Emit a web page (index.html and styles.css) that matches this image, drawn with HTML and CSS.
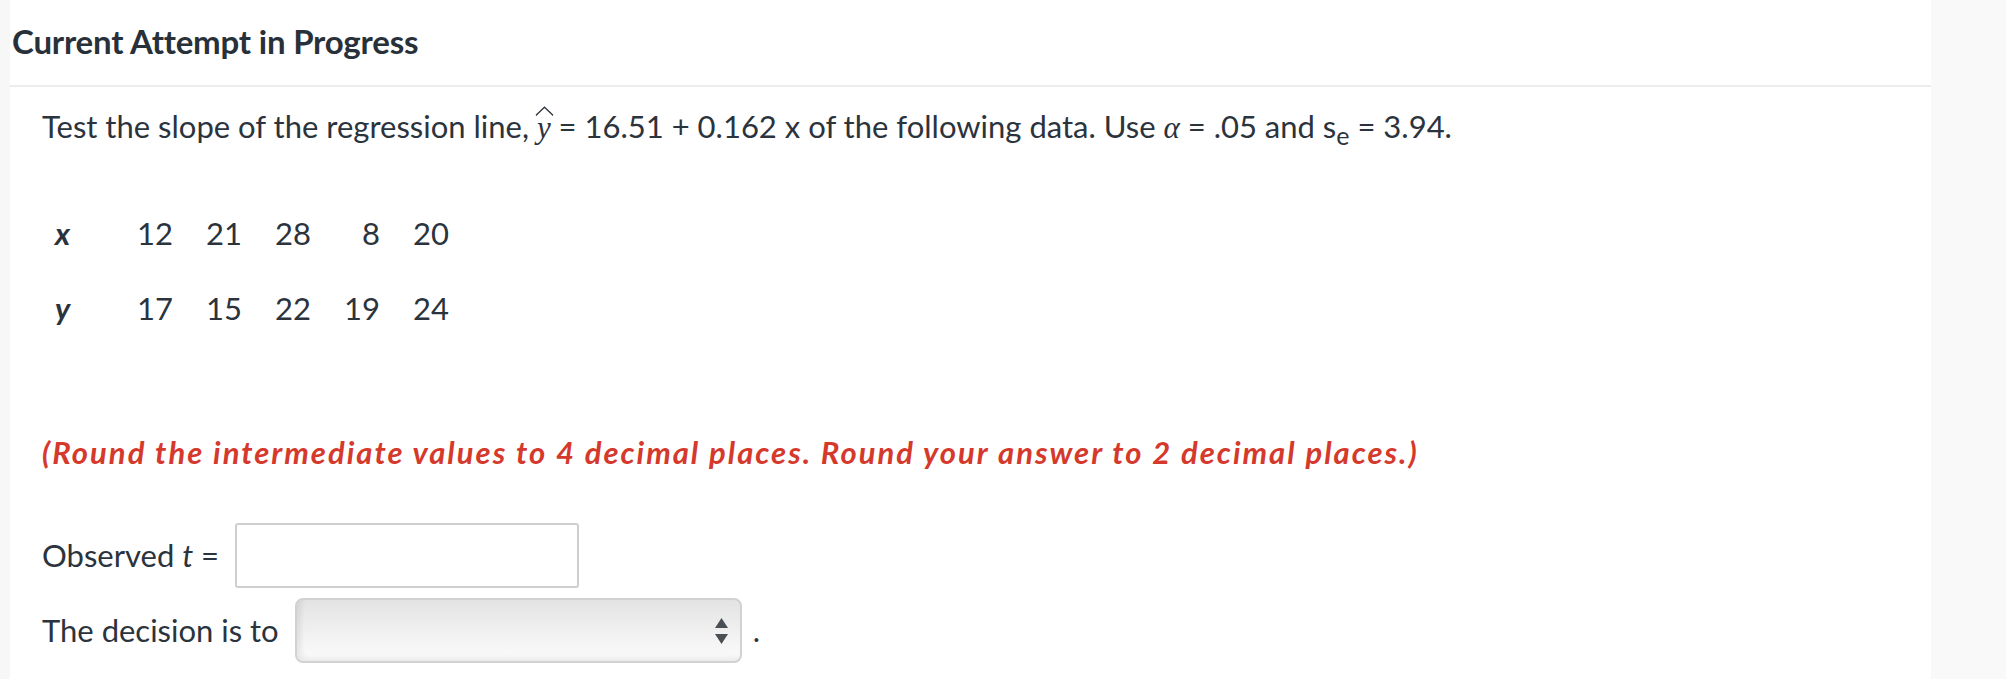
FILE: index.html
```html
<!DOCTYPE html>
<html lang="en">
<head>
<meta charset="utf-8">
<title>Current Attempt in Progress</title>
<link rel="stylesheet" href="styles.css">
</head>
<body>
<div class="page">
  <div class="edge-left"></div>
  <main class="panel">
    <header class="panel-head">
      <h1 class="title">Current Attempt in Progress</h1>
    </header>
    <section class="question">
      <p class="prompt">Test the slope of the regression line, <span class="yhat"><span class="math">y</span><svg class="hat" viewBox="0 0 20 8" preserveAspectRatio="none"><polyline points="1,7.5 10,1 19,7.5" fill="none" stroke="#2b333d" stroke-width="1.2"/></svg></span> = 16.51 + 0.162 x of the following data. Use <span class="math">α</span> = .05 and s<sub class="sub">e</sub> = 3.94.</p>

      <div class="data">
        <div class="lbl">x</div>
        <div class="num">12</div><div class="num">21</div><div class="num">28</div><div class="num">8</div><div class="num">20</div>
        <div class="lbl">y</div>
        <div class="num">17</div><div class="num">15</div><div class="num">22</div><div class="num">19</div><div class="num">24</div>
      </div>

      <p class="note">(Round the intermediate values to 4 decimal places. Round your answer to 2 decimal places.)</p>

      <div class="answers">
        <div class="row">
          <span class="label">Observed <i>t</i> =</span>
          <input class="textbox" type="text" aria-label="Observed t">
        </div>
        <div class="row">
          <span class="label">The decision is to</span>
          <div class="select" role="button" aria-label="decision">
            <svg class="arrows" viewBox="0 0 13 26"><polygon points="6.5,0 13,10 0,10" fill="#4a4f55"/><polygon points="0,16 13,16 6.5,26" fill="#4a4f55"/></svg>
          </div>
          <span class="dot">.</span>
        </div>
      </div>
    </section>
  </main>
  <div class="edge-right"></div>
</div>
</body>
</html>
```

FILE: styles.css
```css
* { box-sizing: border-box; }

html, body {
  margin: 0;
  padding: 0;
  background: #ffffff;
}

body {
  font-family: Lato, "Open Sans", "Liberation Sans", sans-serif;
  color: #2b333d;
}

.page {
  display: flex;
  min-height: 679px;
}

.edge-left {
  width: 10px;
  flex: none;
  background: #f7f7f7;
}

.edge-right {
  flex: 1;
  background: #f9f9f9;
}

.panel {
  width: 1921px;
  flex: none;
  background: #ffffff;
}

.panel-head {
  padding: 22px 0 24px 2px;
  border-bottom: 2px solid #ececec;
}

.title {
  margin: 0;
  font-size: 33px;
  line-height: 39px;
  font-weight: 700;
  letter-spacing: -0.2px;
  color: #283039;
}

.question {
  padding: 21px 0 0 32px;
  font-size: 31px;
  line-height: 37px;
}

.prompt {
  margin: 0;
}

.math {
  font-family: "Liberation Serif", "DejaVu Serif", serif;
  font-style: italic;
}

.yhat {
  position: relative;
  display: inline-block;
}

.hat {
  position: absolute;
  left: -2px;
  top: -2px;
  width: 19px;
  height: 10px;
}

.sub {
  font-size: 25px;
  line-height: 0;
  vertical-align: -7px;
}

.data {
  display: grid;
  grid-template-columns: 49px repeat(5, 69px);
  grid-auto-rows: 75px;
  align-items: center;
  margin: 50px 0 0 13px;
}

.lbl {
  font-style: italic;
  font-weight: 700;
}

.num {
  text-align: right;
}

.note {
  margin: 88px 0 0 0;
  color: #d5392b;
  font-weight: 700;
  font-style: italic;
  letter-spacing: 2px;
}

.answers {
  margin-top: 52px;
  display: flex;
  flex-direction: column;
  gap: 10px;
}

.row {
  display: flex;
  align-items: center;
}

.label {
  margin-right: 16px;
}

.label i {
  font-style: italic;
}

.textbox {
  width: 344px;
  height: 65px;
  border: 2px solid #cfcfcf;
  border-radius: 3px;
  background: #fff;
  font: inherit;
  padding: 0 10px;
}

.select {
  width: 447px;
  height: 65px;
  border: 2px solid #d2d2d2;
  border-radius: 8px;
  background: linear-gradient(to bottom, #e3e3e3 0%, #f1f1f1 55%, #fbfbfb 100%);
  box-shadow: inset 4px -3px 5px rgba(0, 0, 0, 0.07);
  display: flex;
  align-items: center;
  justify-content: flex-end;
  padding-right: 12px;
}

.arrows {
  width: 13px;
  height: 26px;
}

.dot {
  margin-left: 11px;
}
```
